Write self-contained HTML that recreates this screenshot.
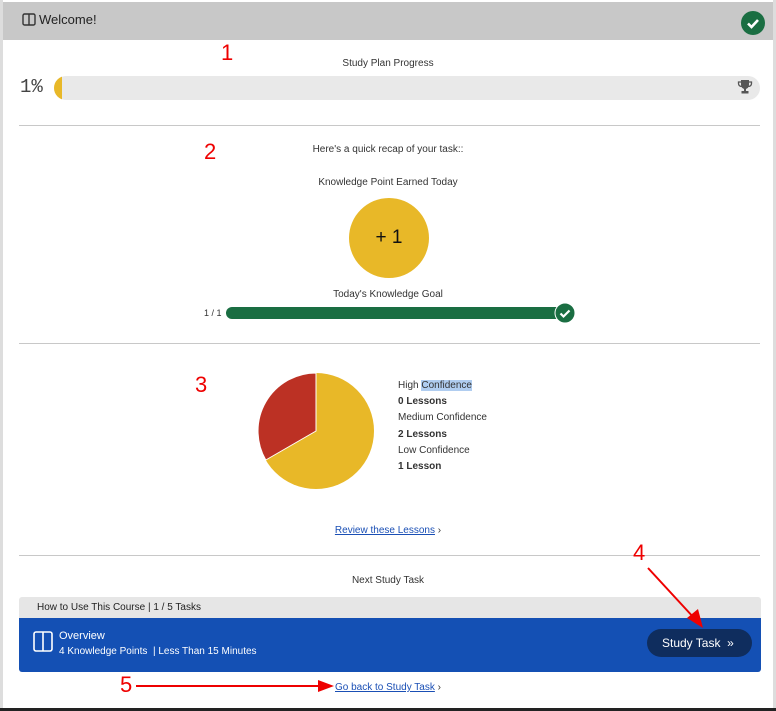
<!DOCTYPE html>
<html><head><style>
*{margin:0;padding:0;box-sizing:border-box}
body{width:776px;height:711px;background:#fff;position:relative;overflow:hidden;font-family:"Liberation Sans",sans-serif;color:#333;font-size:10px}
.a{position:absolute}
.c{position:absolute;left:0;width:776px;text-align:center}
.hr{position:absolute;left:19px;width:741px;height:1px;background:#c8c8c8}
.red{color:#e00;font-size:22px;font-family:"Liberation Sans Narrow","Liberation Sans",sans-serif}
a{color:#1a4fb5;text-decoration:underline}
</style></head><body>
<div class="a" style="left:0;top:0;width:3px;height:711px;background:#ddd"></div>
<div class="a" style="left:773px;top:0;width:3px;height:711px;background:#ddd"></div>
<div class="a" style="left:3px;top:2px;width:770px;height:38px;background:#c8c8c8"></div>
<svg class="a" style="left:22px;top:13px" width="14" height="13" viewBox="0 0 14 13"><rect x="1" y="1" width="12" height="11" rx="1.5" fill="none" stroke="#333" stroke-width="1.4"/><line x1="7" y1="1" x2="7" y2="12" stroke="#333" stroke-width="1.4"/></svg>
<div class="a" style="left:39px;top:12px;font-size:13px;color:#222">Welcome!</div>
<svg class="a" style="left:741px;top:11px" width="24" height="24"><circle cx="12" cy="12" r="12" fill="#1a6e42"/><path d="M7 12.5l3.5 3.5 6.5-7" stroke="#fff" stroke-width="2.6" fill="none"/></svg>
<div class="a red" style="left:221px;top:40px">1</div>
<div class="c" style="top:58px">Study Plan Progress</div>
<div class="a" style="left:20px;top:76px;font-family:'Liberation Mono',monospace;font-size:19px;color:#444">1%</div>
<div class="a" style="left:54px;top:76px;width:706px;height:24px;border-radius:12px;background:#e9e9e9;overflow:hidden"><div style="width:8px;height:24px;background:#e8b828"></div></div>
<svg class="a" style="left:737px;top:79px" width="16" height="16" viewBox="0 0 16 16"><path d="M4 1h8v5a4 4 0 0 1-8 0z" fill="#555"/><path d="M4 3H1.5v1.5a3 3 0 0 0 3 3M12 3h2.5v1.5a3 3 0 0 1-3 3" fill="none" stroke="#555" stroke-width="1.3"/><rect x="7" y="9" width="2" height="3" fill="#555"/><rect x="4.5" y="12" width="7" height="2.5" fill="#555"/></svg>
<div class="hr" style="top:125px"></div>
<div class="a red" style="left:204px;top:139px">2</div>
<div class="c" style="top:144px">Here's a quick recap of your task::</div>
<div class="c" style="top:177px">Knowledge Point Earned Today</div>
<div class="a" style="left:349px;top:198px;width:80px;height:80px;border-radius:50%;background:#e8b828;text-align:center;line-height:80px;font-size:19px;color:#111">+ 1</div>
<div class="c" style="top:289px">Today's Knowledge Goal</div>
<div class="a" style="left:204px;top:308px;font-size:9px">1 / 1</div>
<div class="a" style="left:226px;top:307px;width:345px;height:12px;border-radius:6px;background:#1a6e42"></div>
<svg class="a" style="left:554px;top:302px" width="22" height="22"><circle cx="11" cy="11" r="10" fill="#1a6e42" stroke="#fff" stroke-width="1"/><path d="M6.5 11.5l3 3 6-6" stroke="#fff" stroke-width="2.2" fill="none"/></svg>
<div class="hr" style="top:343px"></div>
<div class="a red" style="left:195px;top:372px">3</div>
<svg class="a" style="left:256px;top:371px" width="120" height="120"><circle cx="60" cy="60" r="58" fill="#e8b828"/><path d="M60 60L60 2A58 58 0 0 0 9.8 89Z" fill="#bc3124" stroke="#fff" stroke-width="1"/></svg>
<div class="a" style="left:398px;top:378px;line-height:16.2px;font-size:10px">High <span style="background:#b0cdf0">Confidence</span><br><b>0 Lessons</b><br>Medium Confidence<br><b>2 Lessons</b><br>Low Confidence<br><b>1 Lesson</b></div>
<div class="c" style="top:525px"><a>Review these Lessons</a> ›</div>
<div class="hr" style="top:555px"></div>
<div class="c" style="top:575px">Next Study Task</div>
<div class="a" style="left:19px;top:597px;width:742px;height:75px;border-radius:3px;background:#e6e6e6;overflow:hidden">
<div style="position:absolute;left:18px;top:5px;font-size:10px;color:#222">How to Use This Course | 1 / 5 Tasks</div>
<div style="position:absolute;left:0;top:21px;width:742px;height:54px;background:#1450b4"></div>
</div>
<svg class="a" style="left:33px;top:631px" width="20" height="21"><rect x="1" y="1" width="18" height="19" rx="2" fill="none" stroke="#fff" stroke-width="1.6"/><line x1="10" y1="1" x2="10" y2="20" stroke="#fff" stroke-width="1.6"/></svg>
<div class="a" style="left:59px;top:630px;color:#fff;font-size:11px">Overview</div>
<div class="a" style="left:59px;top:646px;color:#fff;font-size:10px">4 Knowledge Points &nbsp;| Less Than 15 Minutes</div>
<div class="a" style="left:647px;top:629px;width:105px;height:28px;border-radius:14px;background:#0f2d5e;color:#fff;font-size:12px;line-height:28px;padding-left:15px">Study Task &nbsp;»</div>
<div class="c" style="top:682px"><a>Go back to Study Task</a> ›</div>
<div class="a red" style="left:120px;top:672px">5</div>
<div class="a" style="left:136px;top:685px;width:190px;height:2px;background:#e00"></div>
<svg class="a" style="left:318px;top:680px" width="16" height="12"><path d="M0 0L16 6L0 12Z" fill="#e00"/></svg>
<div class="a red" style="left:633px;top:540px">4</div>
<svg class="a" style="left:645px;top:565px" width="60" height="65"><line x1="3" y1="3" x2="50" y2="54" stroke="#e00" stroke-width="2"/><path d="M58 63L42 53L53 44Z" fill="#e00"/></svg>
<div class="a" style="left:0;top:708px;width:776px;height:3px;background:#222"></div>
</body></html>
